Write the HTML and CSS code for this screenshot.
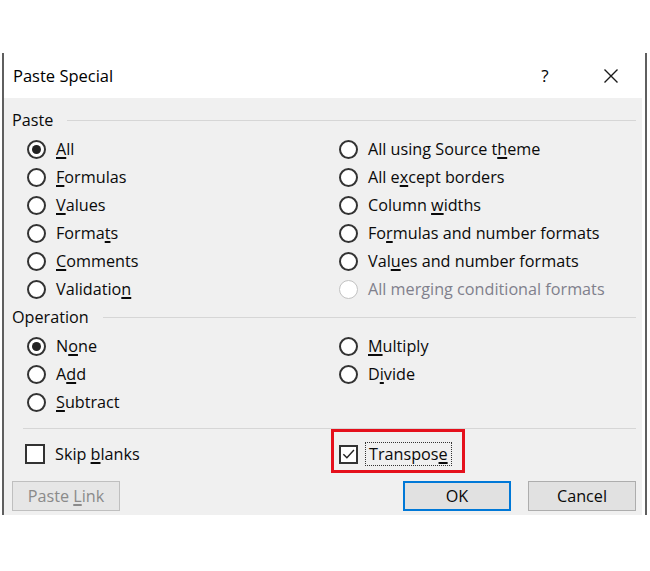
FILE: index.html
```html
<!DOCTYPE html>
<html lang="en">
<head>
<meta charset="utf-8">
<title>Paste Special</title>
<link rel="stylesheet" href="styles.css">
</head>
<body>
<div class="dialog">
  <div class="titlebar">
    <span class="title">Paste Special</span>
    <span class="help">?</span>
    <span class="close">
      <svg width="16" height="16" viewBox="0 0 16 16"><path d="M1.5 1.5 L14.5 14.5 M14.5 1.5 L1.5 14.5" stroke="#1a1a1a" stroke-width="1.4" fill="none"/></svg>
    </span>
  </div>
  <div class="body">
    <div class="group-head"><span>Paste</span><i class="rule"></i></div>
    <div class="options paste">
      <label class="opt"><span class="radio on"></span><span><u>A</u>ll</span></label>
      <label class="opt"><span class="radio"></span><span>All using Source t<u>h</u>eme</span></label>
      <label class="opt"><span class="radio"></span><span><u>F</u>ormulas</span></label>
      <label class="opt"><span class="radio"></span><span>All e<u>x</u>cept borders</span></label>
      <label class="opt"><span class="radio"></span><span><u>V</u>alues</span></label>
      <label class="opt"><span class="radio"></span><span>Column <u>w</u>idths</span></label>
      <label class="opt"><span class="radio"></span><span>Forma<u>t</u>s</span></label>
      <label class="opt"><span class="radio"></span><span>Fo<u>r</u>mulas and number formats</span></label>
      <label class="opt"><span class="radio"></span><span><u>C</u>omments</span></label>
      <label class="opt"><span class="radio"></span><span>Val<u>u</u>es and number formats</span></label>
      <label class="opt"><span class="radio"></span><span>Validatio<u>n</u></span></label>
      <label class="opt disabled"><span class="radio"></span><span>All mergin<u>g</u> conditional formats</span></label>
    </div>
    <div class="group-head op"><span>Operation</span><i class="rule"></i></div>
    <div class="options">
      <label class="opt"><span class="radio on"></span><span>N<u>o</u>ne</span></label>
      <label class="opt"><span class="radio"></span><span><u>M</u>ultiply</span></label>
      <label class="opt"><span class="radio"></span><span>A<u>d</u>d</span></label>
      <label class="opt"><span class="radio"></span><span>D<u>i</u>vide</span></label>
      <label class="opt"><span class="radio"></span><span><u>S</u>ubtract</span></label>
    </div>
    <div class="sep"></div>
    <div class="options checks">
      <label class="opt chk"><span class="box"></span><span><b class="lbl">Skip <u>b</u>lanks</b></span></label>
      <label class="opt chk transpose">
        <span class="box">
          <svg width="16" height="16" viewBox="0 0 16 16"><path d="M2.5 8.2 L6.3 12 L13.8 3.8" stroke="#222" stroke-width="1.5" fill="none"/></svg>
        </span>
        <b class="lbl focus">Transpos<u>e</u></b>
        <span class="highlight"></span>
      </label>
    </div>
    <div class="buttons">
      <button class="btn disabled">Paste <u>L</u>ink</button>
      <span class="spacer"></span>
      <button class="btn default">OK</button>
      <button class="btn">Cancel</button>
    </div>
  </div>
</div>
</body>
</html>
```

FILE: styles.css
```css
* { box-sizing: border-box; }

html, body {
  margin: 0;
  padding: 0;
  background: #ffffff;
}

body {
  font-family: "Open Sans", "Noto Sans", "DejaVu Sans", sans-serif;
  color: #000;
}

.dialog {
  margin-top: 53px;
  margin-left: 2px;
  width: 645px;
  border-left: 2px solid #5f5f5f;
  border-right: 2px solid #5f5f5f;
  background: #fff;
}

.titlebar {
  height: 45px;
  display: flex;
  align-items: center;
  padding-left: 9px;
}

.title {
  flex: 1;
  font-size: 16.5px;
  font-weight: 400;
}

.help {
  width: 20px;
  text-align: center;
  font-size: 17px;
  padding-left: 2px;
}

.close {
  width: 30px;
  height: 16px;
  margin-left: 42px;
  margin-right: 19px;
  display: flex;
  justify-content: center;
}

.body {
  background: #f0f0f0;
  margin-right: 3px;
  padding: 11px 6px 4px 8px;
  font-size: 16.2px;
  font-weight: 500;
  color: #0a0a0a;
}

.group-head {
  height: 22px;
  display: flex;
  align-items: center;
  gap: 14px;
}

.group-head.op {
  margin-top: 3px;
}

.rule {
  flex: 1;
  height: 1px;
  background: #d6d6d6;
  margin-top: 1px;
}

.options {
  display: grid;
  grid-template-columns: 312px 1fr;
  grid-auto-rows: 28px;
  margin-top: 4px;
  margin-left: 15px;
}

.opt {
  display: flex;
  align-items: center;
  gap: 10px;
  white-space: nowrap;
}

.radio {
  width: 19px;
  height: 19px;
  flex: none;
  border: 2px solid #333;
  border-radius: 50%;
  background: #fff;
  display: flex;
  align-items: center;
  justify-content: center;
}

.radio.on::after {
  content: "";
  width: 9px;
  height: 9px;
  border-radius: 50%;
  background: #222;
}

.opt.disabled {
  color: #80808c;
}

.opt.disabled .radio {
  border: 1.5px solid #c2c2c2;
}

u {
  text-decoration-thickness: 1.5px;
  text-underline-offset: 2px;
}

.sep {
  height: 1px;
  background: #d6d6d6;
  margin: 12px 0 0 11px;
  width: 613px;
}

.checks {
  margin-top: 11px;
  margin-left: 13px;
  grid-template-columns: 314px 1fr;
}

.lbl {
  font-weight: inherit;
}

.chk {
  position: relative;
}

.box {
  width: 20px;
  height: 20px;
  flex: none;
  border: 2px solid #333;
  background: #fff;
  display: flex;
  align-items: center;
  justify-content: center;
}

.transpose .box {
  width: 19px;
  height: 19px;
}

.transpose {
  gap: 8px;
}

.focus {
  outline: 1px dotted #333;
  padding: 0 3px;
  line-height: 22px;
}

.highlight {
  position: absolute;
  left: -8px;
  top: -11px;
  width: 134px;
  height: 44px;
  border: 3px solid #e5101c;
}

.buttons {
  display: flex;
  margin-top: 13px;
  margin-right: 0;
}

.spacer {
  flex: 1;
}

.btn {
  width: 108px;
  height: 30px;
  font-family: inherit;
  font-size: 16.2px;
  font-weight: 500;
  color: #0a0a0a;
  background: #e1e1e1;
  border: 1px solid #adadad;
  padding: 0;
  margin-left: 17px;
}

.btn.disabled {
  margin-left: 0;
  color: #8a8a8a;
  background: #e6e6e6;
  border-color: #bfbfbf;
}

.btn.default {
  border: 2px solid #0078d7;
}
```
